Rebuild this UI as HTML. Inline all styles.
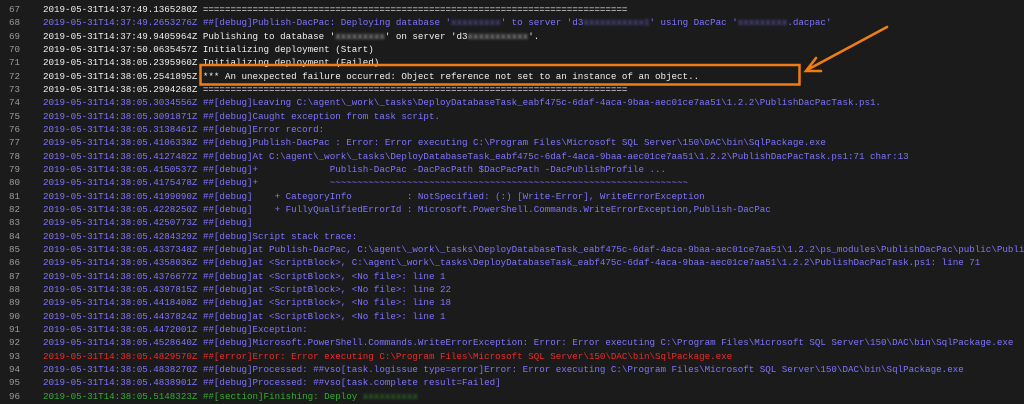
<!DOCTYPE html>
<html><head><meta charset="utf-8"><style>
html,body{margin:0;padding:0;background:#1b1b1b;width:1024px;height:404px;overflow:hidden}
.w{position:absolute;left:0;top:3px;font-family:"Liberation Mono",monospace;font-size:9.2px;line-height:13.34px}
.l{height:13.34px;position:relative}
.n{position:absolute;left:9px;color:#9a9a9a;white-space:pre}
.t{position:absolute;left:43px;white-space:pre}
.p{color:#7f74ff}.wh{color:#f0f0f0}.r{color:#ee2a2a}.g{color:#32ad32}
.b{filter:blur(1.2px);opacity:.8}
</style></head><body>
<div class="w"><div class="l"><span class="n">67</span><span class="t wh">2019-05-31T14:37:49.1365280Z =============================================================================</span></div><div class="l"><span class="n">68</span><span class="t p">2019-05-31T14:37:49.2653276Z ##[debug]Publish-DacPac: Deploying database '<span class="b">xxxxxxxxx</span>' to server 'd3<span class="b">xxxxxxxxxxx1</span>' using DacPac '<span class="b">xxxxxxxxx</span>.dacpac'</span></div><div class="l"><span class="n">69</span><span class="t wh">2019-05-31T14:37:49.9405964Z Publishing to database '<span class="b">xxxxxxxxx</span>' on server 'd3<span class="b">xxxxxxxxxxx</span>'.</span></div><div class="l"><span class="n">70</span><span class="t wh">2019-05-31T14:37:50.0635457Z Initializing deployment (Start)</span></div><div class="l"><span class="n">71</span><span class="t wh">2019-05-31T14:38:05.2395960Z Initializing deployment (Failed)</span></div><div class="l"><span class="n">72</span><span class="t wh">2019-05-31T14:38:05.2541895Z *** An unexpected failure occurred: Object reference not set to an instance of an object..</span></div><div class="l"><span class="n">73</span><span class="t wh">2019-05-31T14:38:05.2994268Z =============================================================================</span></div><div class="l"><span class="n">74</span><span class="t p">2019-05-31T14:38:05.3034556Z ##[debug]Leaving C:\agent\_work\_tasks\DeployDatabaseTask_eabf475c-6daf-4aca-9baa-aec01ce7aa51\1.2.2\PublishDacPacTask.ps1.</span></div><div class="l"><span class="n">75</span><span class="t p">2019-05-31T14:38:05.3091871Z ##[debug]Caught exception from task script.</span></div><div class="l"><span class="n">76</span><span class="t p">2019-05-31T14:38:05.3138461Z ##[debug]Error record:</span></div><div class="l"><span class="n">77</span><span class="t p">2019-05-31T14:38:05.4106338Z ##[debug]Publish-DacPac : Error: Error executing C:\Program Files\Microsoft SQL Server\150\DAC\bin\SqlPackage.exe</span></div><div class="l"><span class="n">78</span><span class="t p">2019-05-31T14:38:05.4127482Z ##[debug]At C:\agent\_work\_tasks\DeployDatabaseTask_eabf475c-6daf-4aca-9baa-aec01ce7aa51\1.2.2\PublishDacPacTask.ps1:71 char:13</span></div><div class="l"><span class="n">79</span><span class="t p">2019-05-31T14:38:05.4150537Z ##[debug]+             Publish-DacPac -DacPacPath $DacPacPath -DacPublishProfile ...</span></div><div class="l"><span class="n">80</span><span class="t p">2019-05-31T14:38:05.4175478Z ##[debug]+             ~~~~~~~~~~~~~~~~~~~~~~~~~~~~~~~~~~~~~~~~~~~~~~~~~~~~~~~~~~~~~~~~~</span></div><div class="l"><span class="n">81</span><span class="t p">2019-05-31T14:38:05.4199090Z ##[debug]    + CategoryInfo          : NotSpecified: (:) [Write-Error], WriteErrorException</span></div><div class="l"><span class="n">82</span><span class="t p">2019-05-31T14:38:05.4228250Z ##[debug]    + FullyQualifiedErrorId : Microsoft.PowerShell.Commands.WriteErrorException,Publish-DacPac</span></div><div class="l"><span class="n">83</span><span class="t p">2019-05-31T14:38:05.4250773Z ##[debug]</span></div><div class="l"><span class="n">84</span><span class="t p">2019-05-31T14:38:05.4284329Z ##[debug]Script stack trace:</span></div><div class="l"><span class="n">85</span><span class="t p">2019-05-31T14:38:05.4337348Z ##[debug]at Publish-DacPac, C:\agent\_work\_tasks\DeployDatabaseTask_eabf475c-6daf-4aca-9baa-aec01ce7aa51\1.2.2\ps_modules\PublishDacPac\public\Publish</span></div><div class="l"><span class="n">86</span><span class="t p">2019-05-31T14:38:05.4358036Z ##[debug]at &lt;ScriptBlock&gt;, C:\agent\_work\_tasks\DeployDatabaseTask_eabf475c-6daf-4aca-9baa-aec01ce7aa51\1.2.2\PublishDacPacTask.ps1: line 71</span></div><div class="l"><span class="n">87</span><span class="t p">2019-05-31T14:38:05.4376677Z ##[debug]at &lt;ScriptBlock&gt;, &lt;No file&gt;: line 1</span></div><div class="l"><span class="n">88</span><span class="t p">2019-05-31T14:38:05.4397815Z ##[debug]at &lt;ScriptBlock&gt;, &lt;No file&gt;: line 22</span></div><div class="l"><span class="n">89</span><span class="t p">2019-05-31T14:38:05.4418408Z ##[debug]at &lt;ScriptBlock&gt;, &lt;No file&gt;: line 18</span></div><div class="l"><span class="n">90</span><span class="t p">2019-05-31T14:38:05.4437824Z ##[debug]at &lt;ScriptBlock&gt;, &lt;No file&gt;: line 1</span></div><div class="l"><span class="n">91</span><span class="t p">2019-05-31T14:38:05.4472001Z ##[debug]Exception:</span></div><div class="l"><span class="n">92</span><span class="t p">2019-05-31T14:38:05.4528640Z ##[debug]Microsoft.PowerShell.Commands.WriteErrorException: Error: Error executing C:\Program Files\Microsoft SQL Server\150\DAC\bin\SqlPackage.exe</span></div><div class="l"><span class="n">93</span><span class="t r">2019-05-31T14:38:05.4829570Z ##[error]Error: Error executing C:\Program Files\Microsoft SQL Server\150\DAC\bin\SqlPackage.exe</span></div><div class="l"><span class="n">94</span><span class="t p">2019-05-31T14:38:05.4838270Z ##[debug]Processed: ##vso[task.logissue type=error]Error: Error executing C:\Program Files\Microsoft SQL Server\150\DAC\bin\SqlPackage.exe</span></div><div class="l"><span class="n">95</span><span class="t p">2019-05-31T14:38:05.4838901Z ##[debug]Processed: ##vso[task.complete result=Failed]</span></div><div class="l"><span class="n">96</span><span class="t g">2019-05-31T14:38:05.5148323Z ##[section]Finishing: Deploy <span class="b">xxxxxxxxxx</span></span></div></div>
<svg style="position:absolute;left:0;top:0" width="1024" height="404">
<rect x="200.5" y="65" width="599" height="19.5" fill="none" stroke="#f07d14" stroke-width="2.5"/>
<g stroke="#f07d14" stroke-width="2.6" fill="none" stroke-linecap="round">
<line x1="887" y1="27" x2="807" y2="70"/>
<polyline points="816,58 806,71 821,71"/>
</g>
</svg>
</body></html>
